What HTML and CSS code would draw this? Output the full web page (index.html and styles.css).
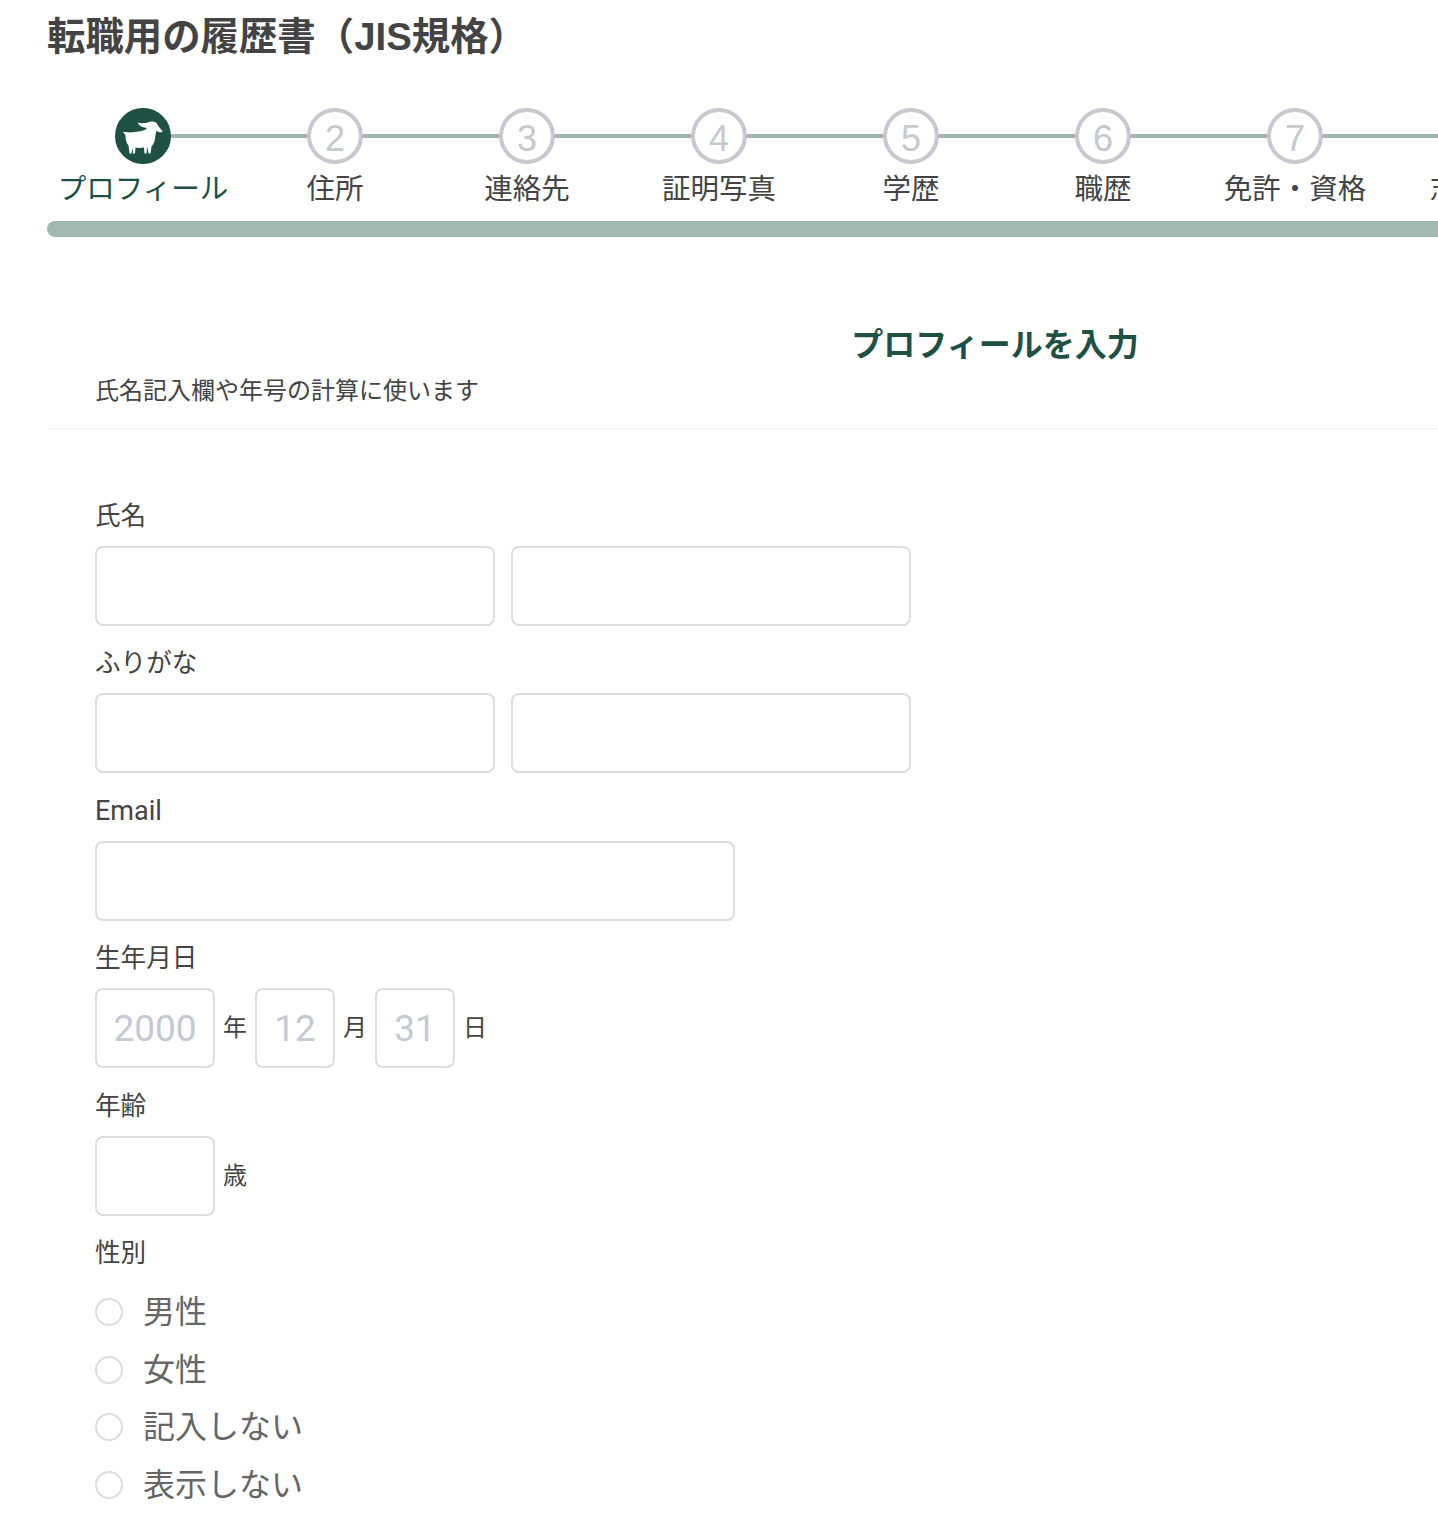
FILE: index.html
```html
<!DOCTYPE html>
<html lang="ja">
<head>
<meta charset="utf-8">
<title>転職用の履歴書（JIS規格）</title>
<link rel="stylesheet" href="styles.css">
</head>
<body>
<div class="page">
  <h1 class="title">転職用の履歴書（JIS規格）</h1>
  <ol class="steps">
    <li class="step active">
      <span class="badge">
        <svg class="goat" viewBox="0 0 56 56" aria-hidden="true"><path d="M8 23.5C12 25 20 24.5 26 23C29 22.5 31 21.5 32 20C28 19.5 24 18 22.5 14.5C26 15.5 30 15.5 33 14.5C35 13.5 38 13 40 14C42 15 43 17.5 44 19L47.5 23C47.5 24.5 45.5 24.5 44 24L41.5 23C40.5 25 40.5 28 40 31C39.5 34 38.5 36 36.5 38.5L35.5 45.5H33.5L32.5 39.5H32L31.5 45.5H29.5L29 39.5C25 40 22 40 20.5 39.5L20 45.5H18L17.5 39.5L16.5 45.5H14.5L13.5 37.5C11 35 10.5 31 10.5 27C9.5 26 8.5 25 8 23.5Z" fill="#fff"/></svg>
      </span>
      <span class="step-label">プロフィール</span>
    </li>
    <li class="step"><span class="badge">2</span><span class="step-label">住所</span></li>
    <li class="step"><span class="badge">3</span><span class="step-label">連絡先</span></li>
    <li class="step"><span class="badge">4</span><span class="step-label">証明写真</span></li>
    <li class="step"><span class="badge">5</span><span class="step-label">学歴</span></li>
    <li class="step"><span class="badge">6</span><span class="step-label">職歴</span></li>
    <li class="step"><span class="badge">7</span><span class="step-label">免許・資格</span></li>
    <li class="step"><span class="badge">8</span><span class="step-label">志望動機</span></li>
  </ol>
  <div class="progress"></div>

  <section class="panel">
    <header class="panel-head">
      <h2 class="panel-title">プロフィールを入力</h2>
      <p class="panel-note">氏名記入欄や年号の計算に使います</p>
    </header>
    <form class="form">
      <div class="field">
        <label class="label">氏名</label>
        <div class="row"><input class="input w400" type="text"><input class="input w400" type="text"></div>
      </div>
      <div class="field">
        <label class="label">ふりがな</label>
        <div class="row"><input class="input w400" type="text"><input class="input w400" type="text"></div>
      </div>
      <div class="field">
        <label class="label label-latin">Email</label>
        <div class="row"><input class="input w640" type="text"></div>
      </div>
      <div class="field">
        <label class="label">生年月日</label>
        <div class="row row-date">
          <input class="input w120" type="text" placeholder="2000"><span class="unit">年</span>
          <input class="input w80" type="text" placeholder="12"><span class="unit">月</span>
          <input class="input w80" type="text" placeholder="31"><span class="unit">日</span>
        </div>
      </div>
      <div class="field">
        <label class="label">年齢</label>
        <div class="row row-date"><input class="input w120" type="text"><span class="unit">歳</span></div>
      </div>
      <div class="field field-last">
        <label class="label">性別</label>
        <div class="radios">
          <div class="radio"><span class="dot"></span><span class="radio-text">男性</span></div>
          <div class="radio"><span class="dot"></span><span class="radio-text">女性</span></div>
          <div class="radio"><span class="dot"></span><span class="radio-text">記入しない</span></div>
          <div class="radio"><span class="dot"></span><span class="radio-text">表示しない</span></div>
        </div>
      </div>
    </form>
  </section>
</div>
</body>
</html>
```
FILE: styles.css
```css
* { box-sizing: border-box; }
html, body { margin: 0; padding: 0; background: #fff; overflow-x: hidden; }
body {
  width: 1438px;
  height: 1514px;
  overflow: hidden;
  font-family: "Liberation Sans", "Noto Sans CJK JP", sans-serif;
  color: #444;
}
.page { width: 1896px; margin-left: 47px; }
.title {
  margin: 0;
  height: 108px;
  padding-top: 14px;
  font-size: 38.4px;
  line-height: 46px;
  font-weight: 700;
  color: #444;
}
.steps { display: flex; list-style: none; margin: 0; padding: 0; }
.step {
  position: relative;
  flex: 0 0 192px;
  display: flex;
  flex-direction: column;
  align-items: center;
}
.step::before {
  content: "";
  position: absolute;
  top: 26px;
  left: 96px;
  width: 192px;
  height: 4px;
  background: #9fb8b2;
}
.step:last-child::before { display: none; }
.badge {
  position: relative;
  width: 56px;
  height: 56px;
  border: 4px solid #c6c8d2;
  border-radius: 50%;
  background: #fff;
  color: #c6c8d2;
  font-family: "Liberation Sans", sans-serif;
  font-size: 36px;
  line-height: 54px;
  text-align: center;
}
.active .badge { background: #1f5044; border-color: #1f5044; }
.goat { position: absolute; left: -4px; top: -4px; width: 56px; height: 56px; display: block; }
.step-label {
  margin-top: 4px;
  font-size: 28.5px;
  line-height: 42px;
  white-space: nowrap;
  color: #444;
}
.active .step-label { color: #1f5044; }
.progress {
  height: 16px;
  margin-top: 11px;
  background: #9fb8b2;
  border-radius: 8px 0 0 8px;
}
.panel-head {
  height: 192px;
  padding: 85px 48px 0;
  border-bottom: 1px solid #f0f0f0;
}
.panel-title {
  margin: 0;
  font-size: 32px;
  line-height: 46px;
  font-weight: 700;
  color: #1f5044;
  text-align: center;
}
.panel-note {
  margin: 0;
  padding-top: 5px;
  font-size: 24px;
  line-height: 36px;
  color: #444;
}
.form { padding: 59.75px 48px 0; display: flex; flex-direction: column; gap: 10.5px; }
.field { display: flex; flex-direction: column; gap: 12px; }
.label { font-size: 25.6px; line-height: 44px; height: 44px; margin-bottom: 1px; color: #444; display: block; padding-top: 5px; }
.label-latin { font-family: "Roboto", sans-serif; font-size: 27px; }
.row { display: flex; gap: 16px; }
.row-date { gap: 0; align-items: center; }
.input {
  height: 80px;
  border: 2px solid #dcdde3;
  border-radius: 8px;
  background: #fff;
  padding: 0;
  outline: none;
  text-align: center;
  font-family: "Roboto", "Liberation Sans", sans-serif;
  font-size: 37px;
  color: #444;
}
.input::placeholder { color: #c6c8d2; opacity: 1; }
.w400 { width: 400px; }
.w640 { width: 640px; }
.w120 { width: 120px; }
.w80 { width: 80px; }
.unit { width: 40px; text-align: center; font-size: 24px; line-height: 36px; color: #444; }
.radios { display: flex; flex-direction: column; gap: 9.5px; margin-top: 5px; }
.radio { display: flex; align-items: center; height: 48px; gap: 20px; }
.dot { width: 28px; height: 28px; border: 2px solid #dcdde3; border-radius: 50%; background: #fff; }
.radio-text { font-size: 32px; line-height: 48px; color: #666; }
```
